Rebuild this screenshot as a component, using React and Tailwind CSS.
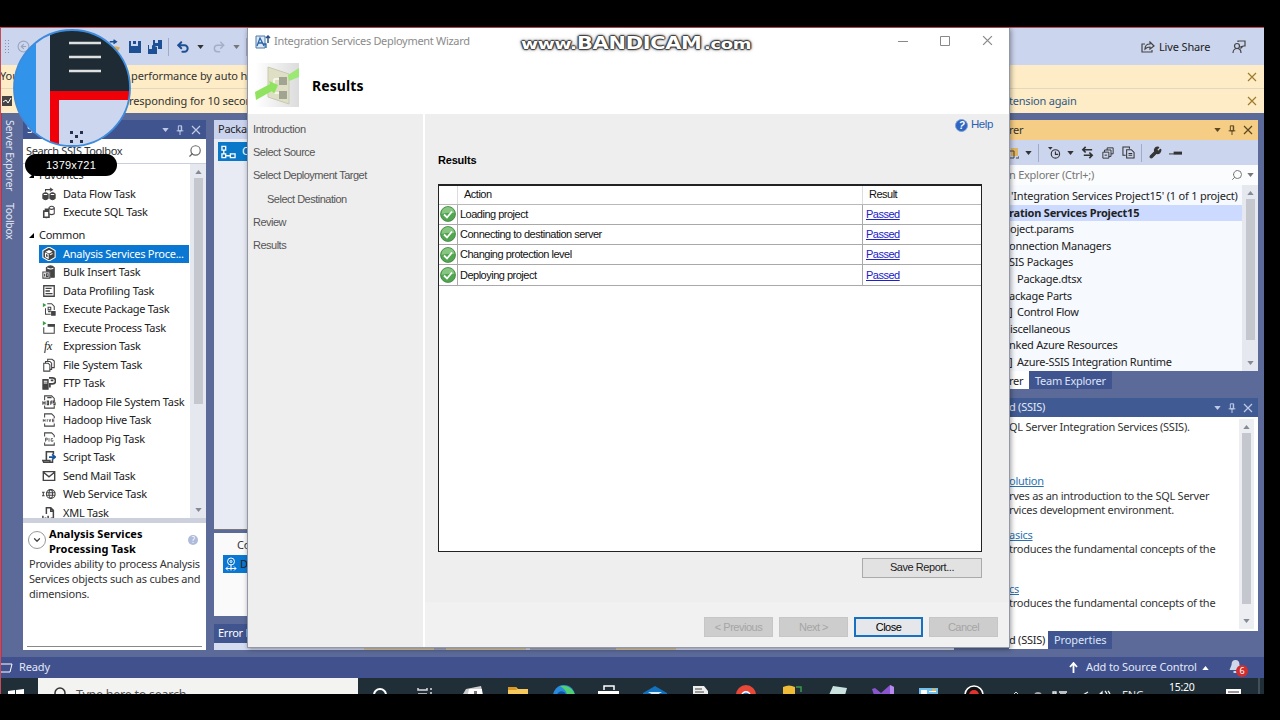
import { ChevronDown, Wrench, Search, Undo2, Redo2, CircleArrowLeft } from 'lucide-react'

const TASK_ICONS = {
  flow: <><path d="M4 5V3h7M9 1l3 2-3 2" fill="none" /><path d="M1 8q3-3 6 0v5q-3 3-6 0zM9 8q3-3 6 0v5q-3 3-6 0z" fill="#444" /><path d="M2 8.5h4M10 8.5h4" stroke="#fff" /></>,
  sql: <><path d="M2 7h6v7H2zM4 7V5h4M5 14v1" fill="none" strokeWidth="1.8" /><path d="M8 3q3-3 6 0v7q-3 2-6 0z" fill="#fff" /><path d="M8 4q3 2 6 0" fill="none" /></>,
  cube: <><path d="M8 0l7 4v8l-7 4-7-4V4z" fill="#444" stroke="#fff" /><path d="M8 3.500l4 2-4 2-4-2z" fill="#fff" stroke="none" /><path d="M4 7l3 1.500V13l-3-2zM9 9l3-1.500" fill="none" stroke="#fff" /></>,
  bulk: <><path d="M5 3q5-4 9 0v11h-4V7H5z" fill="#444" /><path d="M6 3.500q4 2 7 0" stroke="#fff" fill="none" /><path d="M1 8h8v7H1z" fill="#fff" /><path d="M3 10v3M5 10h2v3H5z" fill="none" /></>,
  profile: <><path d="M2 2h12v12H2z" fill="none" strokeWidth="1.500" /><path d="M4 5h7M4 8h5M4 11h8" strokeWidth="1.500" /></>,
  pack: <><path d="M1 1l4 2.500L1 6z" fill="#3c9a48" stroke="none" /><path d="M6 2h5l3 3v4M4 7v7h6M7 6h3v3H7zM7 11h3" fill="none" /><path d="M11 11h4v4h-4z" fill="#444" /></>,
  process: <><path d="M1 0l4 2.500L1 5z" fill="#3c9a48" stroke="none" /><path d="M2 7v7h12V4H7" fill="none" /><path d="M7 4h7v2H7z" fill="#444" /></>,
  files: <><path d="M2 6h5l2 2v7H2z" fill="#fff" /><path d="M4 6V4h5l2 2v7H9M6.500 4V1.500h5l2.500 2V11h-3" fill="none" /></>,
  ftp: <><path d="M1 4h6v11H1z" fill="#444" /><path d="M2 6h4M2 8h4" stroke="#fff" /><path d="M8 2h4a3 3 0 010 7H9v4M10 5h3" fill="none" strokeWidth="2" /></>,
  hdfs: <><path d="M3 6V1h8l3 3v3M3 12v3h11v-3M6 3h5" fill="none" /><path d="M1 7v4M1 9h2.500M3.500 7v4M6 7h1.500v4H6zM10 7v4M10 7h2M10 9h2M15 7h-2v2h2v2h-2" fill="none" /></>,
  hive: <><path d="M3 5V1h8l3 3v2M3 12v3h11v-3" fill="none" /><path d="M1.500 7v3M1.500 8.500h2M3.500 7v3M6 7v3M8 7l1 3 1-3M14 7h-2v3h2M12 8.500h2" fill="none" strokeWidth=".9" /></>,
  pig: <><path d="M3 5V1h8l3 3v2M3 12v3h11v-3" fill="none" /><path d="M4 11V7h2v2H4M8 7v4M12.500 7.500H10.500v3h2V9" fill="none" strokeWidth=".9" /></>,
  script: <><path d="M5 11V2h8v3M1 12h8v2H2zM12 11v3H9" fill="none" strokeWidth="1.800" /><path d="M8 8h6M11.500 5L15 8l-3.500 3" fill="none" stroke="#15549a" strokeWidth="2" /></>,
  mail: <path d="M1.500 3h13v10h-13zM2 4l6 5 6-5" fill="none" strokeWidth="1.600" />,
  web: <><path d="M0 6h3M0 10h3M1.500 6v4" /><circle cx="10" cy="8" r="5" fill="none" /><ellipse cx="10" cy="8" rx="2" ry="5" fill="none" /><path d="M5 6.500h10M5 9.500h10" /></>,
  xml: <path d="M5 9V2h5l3 3v9h-3M10 2v4h3M1 11v4M3 14h2M7 11v4" fill="none" strokeWidth="1.700" />,
}

const COMMON_TASKS = [
  ['bulk', 'Bulk Insert Task'],
  ['profile', 'Data Profiling Task'],
  ['pack', 'Execute Package Task'],
  ['process', 'Execute Process Task'],
  ['fx', 'Expression Task'],
  ['files', 'File System Task'],
  ['ftp', 'FTP Task'],
  ['hdfs', 'Hadoop File System Task'],
  ['hive', 'Hadoop Hive Task'],
  ['pig', 'Hadoop Pig Task'],
  ['script', 'Script Task'],
  ['mail', 'Send Mail Task'],
  ['web', 'Web Service Task'],
  ['xml', 'XML Task'],
]

const TREE = [
  ['oject.params', 'pl-px'],
  ['onnection Managers', 'pl-0'],
  ['SIS Packages', 'pl-0'],
  ['Package.dtsx', 'pl-2'],
  ['ackage Parts', 'pl-0'],
  ['Control Flow', 'pl-2', true],
  ['iscellaneous', 'pl-px'],
  ['nked Azure Resources', 'pl-0'],
  ['Azure-SSIS Integration Runtime', 'pl-2', true],
]

const ACTIONS = ['Loading project', 'Connecting to destination server', 'Changing protection level', 'Deploying project']

function TaskRow({ icon, label, selected }) {
  return (
    <div className={`ml-4 flex h-[18.5px] w-[150px] shrink-0 items-center ${selected ? 'bg-[#0a78d2] text-white' : ''}`}>
      {icon === 'fx' ? (
        <span className="ml-[5px] w-[19px] font-['Liberation_Serif',serif] text-[12px] italic">fx</span>
      ) : (
        <svg viewBox="0 0 16 16" className="mr-[7px] ml-[3px] size-[14px] shrink-0" stroke="#444" strokeWidth="1.2">{TASK_ICONS[icon]}</svg>
      )}
      <span className="whitespace-nowrap">{label}</span>
    </div>
  )
}

function Caret({ className = '', up }) {
  return (
    <svg viewBox="0 0 8 5" className={`h-[4px] w-[7px] shrink-0 ${className}`} fill="currentColor">
      <path d={up ? 'M0 5L4 0l4 5z' : 'M0 0h8L4 5z'} />
    </svg>
  )
}

function Cross({ className = 'size-[10px]' }) {
  return (
    <svg viewBox="0 0 10 10" className={`shrink-0 ${className}`} stroke="currentColor" strokeWidth="1.2">
      <path d="M1 1l8 8M9 1L1 9" />
    </svg>
  )
}

function PanelButtons({ className }) {
  return (
    <div className={`ml-auto flex items-center gap-[7px] pr-[5px] ${className}`}>
      <Caret />
      <svg viewBox="0 0 8 12" className="h-[10px] w-[8px]" fill="none" stroke="currentColor" strokeWidth="1.2">
        <path d="M2 1h4v6H2zM0 7h8M4 7v5M5.500 1v6" />
      </svg>
      <Cross />
    </div>
  )
}

function Scrollbar({ className, thumb }) {
  return (
    <div className={`flex shrink-0 flex-col items-center justify-between py-[6px] text-[#858b96] ${className}`}>
      <Caret up />
      <div className={`mt-[4px] mb-auto w-[9px] bg-[#c4c7cd] ${thumb}`} />
      <Caret />
    </div>
  )
}

function Toolbar() {
  return (
    <div className="flex h-[37px] items-center bg-[#ccd5ee] text-[#1c4f93]">
      <div className="ml-[3px] h-[16px] w-[6px] bg-[radial-gradient(#8793b4_1px,transparent_1px)] bg-[size:3px_3px]" />
      <CircleArrowLeft className="ml-[7px] size-[13px] text-[#9aa4bd]" />
      <svg viewBox="0 0 16 16" className="ml-[76px] size-[15px]">
        <path d="M1 8h10l4 1-3 5H2z" fill="#dca94c" />
        <path d="M4 3h7M8 1l3 2-3 2" fill="none" stroke="#1c4f93" strokeWidth="1.500" />
      </svg>
      <svg viewBox="0 0 12 12" className="ml-[8px] size-[12px]" fill="currentColor">
        <path d="M0 0h2v5h7V0h3v12H0zM4 0h3v3H4z" />
      </svg>
      <svg viewBox="0 0 14 14" className="ml-[7px] size-[14px]" fill="currentColor">
        <path d="M5 0h2v3h3V0h4v9h-4V6H5zM0 5h1v4h3V5l5 2v7H0z" />
      </svg>
      <div className="ml-[6px] h-[18px] w-px bg-[#a1abc8]" />
      <Undo2 strokeWidth={3.5} className="ml-[7px] size-[14px]" />
      <Caret className="ml-[7px] h-[3px] w-[5px] text-[#333]" />
      <Redo2 strokeWidth={2.500} className="ml-[8px] size-[14px] text-[#a4aec7]" />
      <Caret className="ml-[7px] h-[3px] w-[5px] text-[#777]" />
      <div className="ml-[6px] h-[18px] w-px bg-[#a1abc8]" />
      <svg viewBox="0 0 14 12" className="ml-auto h-[12px] w-[14px]" fill="none" stroke="#444" strokeWidth="1.200">
        <path d="M4 3H1v8h10V9M4 8c0-4 3-5 5-5V1l4 4-4 3V6C7 6 5 7 4 8z" />
      </svg>
      <span className="ml-[4px] w-[51px] pt-px tracking-[-0.15px] whitespace-nowrap text-[#222]">Live Share</span>
      <svg viewBox="0 0 14 14" className="mr-[18px] ml-[22px] size-[14px]" fill="none" stroke="#444" strokeWidth="1.200">
        <circle cx="5" cy="6" r="2.500" />
        <path d="M1 13c0-6 8-6 8 0M6 2V1h7v5h-2L9 8V6" />
      </svg>
    </div>
  )
}

function InfoBar({ children, className }) {
  return <div className={`flex h-6 items-center overflow-hidden bg-[#fdecc5] tracking-[-0.1px] whitespace-nowrap text-[#333] ${className}`}>{children}</div>
}

function Toolbox() {
  return (
    <div className="flex h-[530px] w-[183px] flex-col bg-white">
      <div className="flex h-[19px] shrink-0 items-center bg-[#405590] pl-[4px] text-white">
        <span>SSIS Toolbox</span>
        <PanelButtons className="text-[#bfcae8]" />
      </div>
      <div className="flex h-[25px] shrink-0 items-center border-b border-[#c9cfdf] pl-[3px]">
        <span className="tracking-[-0.35px] text-[#333]">Search SSIS Toolbox</span>
        <Search className="mr-[4px] ml-auto size-[14px] -scale-x-100 text-[#666]" />
      </div>
      <div className="flex h-[354px] shrink-0">
        <div className="flex w-[167px] flex-col overflow-hidden pt-[2px]">
          <div className="flex h-[18.5px] shrink-0 items-center pl-[6px]">
            <svg viewBox="0 0 6 6" className="mr-[5px] size-[5px]"><path d="M6 0v6H0z" /></svg>
            Favorites
          </div>
          <TaskRow icon="flow" label="Data Flow Task" />
          <TaskRow icon="sql" label="Execute SQL Task" />
          <div className="mt-[5px] flex h-[18px] shrink-0 items-center pl-[6px]">
            <svg viewBox="0 0 6 6" className="mr-[5px] size-[5px]"><path d="M6 0v6H0z" /></svg>
            Common
          </div>
          <TaskRow icon="cube" label="Analysis Services Proce..." selected />
          {COMMON_TASKS.map(([icon, label]) => <TaskRow key={icon} icon={icon} label={label} />)}
        </div>
        <Scrollbar className="w-4 bg-[#e6e8f0]" thumb="h-[226px]" />
      </div>
      <div className="h-[5px] shrink-0 bg-[#ccd0dc]" />
      <div className="flex h-[34px] shrink-0 pt-[4px] pl-[5px]">
        <div className="mt-[4px] flex size-[18px] items-center justify-center rounded-full border border-[#999]">
          <ChevronDown strokeWidth={3} className="size-[10px] text-[#444]" />
        </div>
        <div className="ml-[3px] leading-[14.5px] font-bold tracking-[0.03px] whitespace-nowrap text-black">
          Analysis Services<br />Processing Task
        </div>
        <span className="mt-[8px] mr-[8px] ml-auto flex size-[10px] items-center justify-center rounded-full bg-[#aebbdc] text-[8px] text-white">?</span>
      </div>
      <div className="pl-[6px] leading-[14.8px] tracking-[-0.22px] whitespace-nowrap text-[#333]">
        Provides ability to process Analysis<br />Services objects such as cubes and<br />dimensions.
      </div>
      <div className="mx-[4px] mt-auto mb-[3px] h-px bg-[#888]" />
    </div>
  )
}

function DesignArea() {
  return (
    <div className="ml-2 flex h-[530px] w-[740px] flex-col">
      <div className="flex h-[19px] items-center bg-[#c9d3ee] pl-[4px]">Packa</div>
      <div className="h-[391px] border-b border-[#777] bg-[#e9ebf4] pt-[3px] pl-[4px]">
        <div className="flex h-[19px] items-center gap-[6px] bg-[#0a78c8] pl-[3px] text-white">
          <svg viewBox="0 0 16 14" className="h-[14px] w-[15px]" fill="none" stroke="#fff" strokeWidth="1.400">
            <path d="M1 1h4v4H1zM1 9h4v4H1zM10 9h5v4h-5zM3 5v4M5 11h5" />
          </svg>
          C
        </div>
      </div>
      <div className="mt-[3px] h-[83px] bg-[#fafafa] pt-[2px]">
        <div className="flex h-[20px] items-center pl-[23px] text-[#333]">Co</div>
        <div className="ml-[9px] flex h-[18px] items-center bg-[#0a78d2] pl-[2px]">
          <svg viewBox="0 0 12 14" className="mr-[3px] h-[15px] w-[12px]" fill="none" stroke="#fff">
            <circle cx="6" cy="4" r="3.500" /><circle cx="6" cy="4" r="1" /><path d="M6 7v6M1 11h10M3 9l-2 2 2 2M9 9l2 2-2 2" />
          </svg>
          D
        </div>
      </div>
      <div className="mt-[8px] flex h-[19px] items-center bg-[#405590] pl-[4px] text-white">Error L</div>
      <div className="flex h-[7px] items-end bg-[#d5dcf0] pl-[150px]">
        <div className="h-[3px] w-[70px] bg-[#d9c9a5]" />
        <div className="h-[3px] w-[12px] bg-[#a7aec0]" />
        <div className="h-[3px] w-[80px] bg-[#d9c9a5]" />
        <div className="ml-[4px] h-[3px] w-[86px] bg-[#a7aec0]" />
        <div className="h-[3px] w-[60px] bg-[#d9c9a5]" />
      </div>
    </div>
  )
}

function SolutionToolbar() {
  return (
    <div className="flex h-[25px] shrink-0 items-center bg-[#ccd5ee] text-[#333]">
      <svg viewBox="0 0 10 12" className="h-[12px] w-[10px]"><path d="M2 1h7v8H2z" fill="#e2b45f" /><path d="M0 4h5v7H0M7 11h3V9" fill="none" stroke="#444" /></svg>
      <Caret className="ml-[6px] h-[3px] w-[5px]" />
      <div className="ml-[6px] h-[18px] w-px bg-[#a1abc8]" />
      <svg viewBox="0 0 14 14" className="ml-[9px] size-[13px]" fill="none" stroke="currentColor" strokeWidth="1.200">
        <circle cx="8" cy="8.500" r="4.500" /><path d="M8 6v3h3" /><path d="M0 1h5L2.500 4z" fill="#333" stroke="none" />
      </svg>
      <Caret className="ml-[6px] h-[3px] w-[5px]" />
      <svg viewBox="0 0 14 14" className="ml-[7px] size-[13px]" fill="none" stroke="currentColor" strokeWidth="1.800">
        <path d="M12 4H3M5 1L2 4l3 3M3 10h9M9 7l3 3-3 3" />
      </svg>
      <svg viewBox="0 0 14 14" className="ml-[8px] size-[12px]" fill="none" stroke="currentColor" strokeWidth="1.100">
        <path d="M1 6h7v7H1zM3 6V3.500h7.500V11H8M6 3.500V1h7v7h-2.500M3 9.500h3" />
      </svg>
      <svg viewBox="0 0 14 14" className="ml-[8px] size-[13px]" fill="none" stroke="currentColor" strokeWidth="1.100">
        <path d="M4 10H1V1h7v2M5 4h5l3 3v6H5zM7 8h4M7 10h4" />
      </svg>
      <div className="ml-[6px] h-[18px] w-px bg-[#a1abc8]" />
      <Wrench fill="currentColor" className="ml-[7px] size-[13px]" />
      <svg viewBox="0 0 14 6" className="ml-[7px] h-[6px] w-[13px]"><path d="M0 4h14" stroke="#333" /><path d="M5 1.500h9v3H5z" fill="#333" /></svg>
    </div>
  )
}

function RightColumn() {
  return (
    <div className="ml-auto flex w-[249px] flex-col overflow-hidden whitespace-nowrap">
      <div className="flex h-[20px] shrink-0 items-center bg-[#f5cd84] text-[#333]">
        rer
        <PanelButtons className="text-[#5c4820]" />
      </div>
      <SolutionToolbar />
      <div className="flex h-[20px] shrink-0 items-center bg-[#fbfcfe] text-[#777]">
        n Explorer (Ctrl+;)
        <Search className="ml-auto size-[12px] -scale-x-100" />
        <Caret className="mr-[4px] ml-[4px] h-[3px] w-[5px]" />
      </div>
      <div className="flex h-[186px] shrink-0 bg-[#f6f9fe]">
        <div className="w-[233px] pt-[3px]">
          <div className="flex h-[16.6px] items-center pl-[2px] tracking-[-0.2px]">'Integration Services Project15' (1 of 1 project)</div>
          <div className="flex h-[16.6px] items-center bg-[#cbdafe] font-bold tracking-[-0.2px]">ration Services Project15</div>
          {TREE.map(([label, pad, bracket]) => (
            <div key={label} className={`flex h-[16.6px] items-center ${pad}`}>
              {bracket && <span className="-ml-[8px] w-[8px]">]</span>}
              {label}
            </div>
          ))}
        </div>
        <Scrollbar className="w-[16px] bg-[#e6e8ef]" thumb="h-[141px]" />
      </div>
      <div className="flex h-[18px] shrink-0 leading-[20px]">
        <div className="w-[20px] bg-white">rer</div>
        <div className="bg-[#405590] px-[6px] text-[#dce4f7]">Team Explorer</div>
      </div>
      <div className="mt-[9px] flex h-[19px] shrink-0 items-center bg-[#405a94] text-[#e3e9f7]">
        d (SSIS)
        <PanelButtons className="text-[#bfcae8]" />
      </div>
      <div className="flex h-[214px] shrink-0 bg-white text-[#333]">
        <div className="flex w-[230px] flex-col pt-[3px] leading-[14.5px]">
          <div>QL Server Integration Services (SSIS).</div>
          <div className="mt-[39.5px] text-[#2d72b0] underline">olution</div>
          <div>rves as an introduction to the SQL Server</div>
          <div>rvices development environment.</div>
          <div className="mt-[10px] text-[#2d72b0] underline">asics</div>
          <div>troduces the fundamental concepts of the</div>
          <div className="mt-[25px] text-[#2d72b0] underline">cs</div>
          <div>troduces the fundamental concepts of the</div>
        </div>
        <Scrollbar className="my-[2px] w-[15px] bg-[#eceef2]" thumb="h-[171px]" />
      </div>
      <div className="flex h-[18px] shrink-0 leading-[18px]">
        <div className="w-[39px] bg-white">d (SSIS)</div>
        <div className="bg-[#405590] px-[6px] tracking-[-0.1px] text-[#dce4f7]">Properties</div>
      </div>
    </div>
  )
}

function Taskbar() {
  return (
    <div className="relative flex h-[16px] items-start overflow-hidden bg-[#1f2e37]">
      <div className="flex w-[37px] justify-center pt-[11px] pl-[-6px]">
        <svg viewBox="0 0 16 16" className="mr-[8px] size-[16px] shrink-0" fill="#fff"><path d="M0 2l7-1v7H0zM8 1l8-1v8H8zM0 9h7v6l-7-1zM8 9h8v7l-8-1z" /></svg>
      </div>
      <div className="flex h-[16px] w-[320px] bg-[#f3f3f2] pt-[9px] pl-[15px]">
        <svg viewBox="0 0 14 14" className="size-[14px] shrink-0" fill="none" stroke="#333" strokeWidth="1.500"><circle cx="7" cy="6" r="5" /></svg>
        <span className="ml-[9px] text-[12.5px] leading-[15px] text-[#555]">Type here to search</span>
      </div>
      <svg viewBox="358 0 906 16" className="h-[16px] w-[906px]" fill="none">
        <circle cx="380" cy="17" r="6" stroke="#fff" strokeWidth="2" />
        <path d="M418 10v2h9v-2M418 16h9M431 10v2M431 14v4" stroke="#ddd" strokeWidth="1.500" />
        <path d="M466 11l15-3 2 8h-20z" fill="#ccc" /><path d="M469 11h13v5h-14z" fill="#fff" /><path d="M474 13v3h3v-3z" fill="#777" />
        <path d="M508 9h8l2 2h10v5h-20z" fill="#f7c95d" /><path d="M508 9h8l1 3h-9z" fill="#dc9826" />
        <circle cx="564" cy="18" r="11" fill="#2a8bdc" /><path d="M560 8c10-2 15 6 15 10h-8c0-5-3-7-7-10z" fill="#51cf72" /><path d="M557 17c1-5 8-5 9 0z" fill="#0e529f" />
        <path d="M598 13h21v4h-21z" fill="#fff" /><path d="M604 12V8h10v4" stroke="#fff" strokeWidth="1.500" />
        <path d="M643 15l12-7 12 7v2h-24z" fill="#1471bd" /><path d="M648 14h14l-7 4z" fill="#dcecff" />
        <path d="M693 8h11l4 5v4h-15z" fill="#eee" /><path d="M695 11h7M695 14h9" stroke="#444" />
        <path d="M736 17a10 10 0 0120 0z" fill="#e84838" /><circle cx="746" cy="18" r="5" fill="#fff" /><circle cx="746" cy="18" r="3.500" fill="#3c78d8" />
        <path d="M783 9q6-3 12 0v8h-12z" fill="#eebc38" /><path d="M796 9h5v5" stroke="#3c9a48" strokeWidth="1.500" />
        <path d="M833 8l14 2-2 7h-16z" fill="#c9e2df" />
        <path d="M872 11l3-1 6 5 9-8 4 2v8h-20z" fill="#8a55cf" /><path d="M890 7l4 2v8h-4z" fill="#b78af0" />
        <path d="M919 10h19v7h-19z" fill="#72c0ee" /><path d="M921 12h6v4h-6zM929 13h7v1h-7z" fill="#fff" /><path d="M932 11h4v2h-4z" fill="#edb541" />
        <circle cx="974" cy="17" r="9" fill="#111" stroke="#fff" strokeWidth="1.500" /><circle cx="974" cy="17" r="5" fill="#e13232" />
        <path d="M1014 16l2-2 2 2" stroke="#ddd" /><circle cx="1038" cy="18" r="4" fill="#aaa" />
        <path d="M1053 14h3v2h-3zM1059 14h8M1060 16h6M1083 17l5-3M1099 17l3-3v3M1105 13q2 2 2 4M1108 13q2 2 2 4" stroke="#eee" strokeWidth="1.300" />
        <path d="M1226 11h15v6h-15z" fill="#fff" /><path d="M1228 14h11" stroke="#333" /><path d="M1259 0v16" stroke="#66717a" />
      </svg>
      <span className="absolute top-[10px] left-[1121px] text-[11px] leading-[14px] text-[#e8e8e8]">ENG</span>
      <span className="absolute top-[2px] left-[1168px] text-[10.5px] leading-[14px] text-white">15:20</span>
    </div>
  )
}

function WizardButton({ children, className = 'border border-[#c6c6c6] bg-[#cdcdcd] text-[#a5a5a5]' }) {
  return <button className={`h-[20px] w-[69px] ${className}`}>{children}</button>
}

function Wizard() {
  return (
    <div className="absolute top-[28px] left-[247px] flex h-[620px] w-[763px] flex-col border-r border-b border-l border-[#9298a8] bg-white font-['Liberation_Sans',sans-serif] text-[11px] tracking-[-0.5px] shadow-[1px_1px_5px_rgba(0,0,0,0.4)]">
      <div className="flex h-[27px] shrink-0 items-center pl-[7px] font-['Noto_Sans',sans-serif] text-[#8b8b8b]">
        <svg viewBox="0 0 16 14" className="h-[14px] w-[16px]" fill="none">
          <path d="M1 1h9v12H1z" fill="#dce8f8" stroke="#4b78aa" />
          <path d="M2 11l3-8 4 8M3 8h5M8 9h3v4" stroke="#2864a5" strokeWidth="1.300" />
          <path d="M13 8V1M11 3l2-2 2 2" stroke="#2b4f85" strokeWidth="1.500" />
        </svg>
        <span className="ml-[3px] text-[11px] tracking-[-0.31px] whitespace-nowrap">Integration Services Deployment Wizard</span>
        <svg viewBox="0 0 10 10" className="mr-[32px] ml-auto size-[10px]" stroke="#888"><path d="M0 4.500h10" /></svg>
        <svg viewBox="0 0 10 10" className="mr-[32px] mb-[2px] size-[10px]" fill="none" stroke="#888"><path d="M.5.500h9v9h-9z" /></svg>
        <Cross className="mr-[16px] mb-[2px] size-[11px]" />
      </div>
      <div className="flex h-[59px] shrink-0 items-start pt-[8px] pl-[7px]">
        <svg viewBox="0 0 44 44" className="size-[44px]">
          <defs><linearGradient id="tile"><stop stopColor="#fff" /><stop offset="1" stopColor="#dcdcdc" /></linearGradient></defs>
          <path d="M0 0h44v44H0z" fill="url(#tile)" />
          <path d="M13 4l21 7v30l-21-7z" fill="#dedfc5" stroke="#c8c9b0" />
          <path d="M24 14h8v8h-8zM24 28h8v8h-8z" fill="#a2a492" />
          <path d="M19 16h5M19 16v14h5" fill="none" stroke="#f4f5e6" strokeWidth="2" />
          <path d="M0 29l15-8-1-3 9 4-4 9-2-3-16 9z" fill="#8fe35f" />
          <path d="M33 12l11-7v9l-10 4z" fill="#9be872" />
        </svg>
        <h1 className="mt-[13px] ml-[13px] font-['Noto_Sans',sans-serif] text-[14px] leading-[19px] font-bold tracking-[0.1px] text-black">Results</h1>
      </div>
      <div className="flex min-h-0 flex-1 bg-[#eeeeee]">
        <nav className="w-[177px] shrink-0 border-r-2 border-white pt-[4px] pl-[5px] text-[#555]">
          {['Introduction', 'Select Source', 'Select Deployment Target', 'Select Destination', 'Review', 'Results'].map((step) => (
            <div key={step} className={`flex h-[23.1px] items-center ${step === 'Select Destination' ? 'pl-[14px]' : ''}`}>
              <span className={step === 'Introduction' ? 'tracking-[-0.4px]' : ''}>{step}</span>
            </div>
          ))}
        </nav>
        <div className="flex flex-1 flex-col">
          <div className="flex h-[22px] items-center justify-end gap-[3px] pr-[16px] text-[#2b5fb4]">
            <span className="flex size-[13px] items-center justify-center rounded-full border border-[#7ca0d8] bg-[#2f65c0] text-[10px] font-bold text-white italic">?</span>
            <span className="text-[11.5px] tracking-[-0.4px]">Help</span>
          </div>
          <div className="mt-[16px] ml-[13px] font-bold tracking-[-0.2px] text-black">Results</div>
          <div className="mt-[15px] ml-[13px] h-[368px] w-[544px] border-[1.5px] border-t-2 border-[#222] bg-white text-[#111]">
            <div className="flex h-[19px] items-center border-b border-[#b9b9b9]">
              <div className="ml-[18px] flex h-full w-[406px] items-center border-r border-l border-[#ddd] pl-[6px]">Action</div>
              <div className="pl-[6px]">Result</div>
            </div>
            {ACTIONS.map((action) => (
              <div key={action} className="flex h-[20.3px] items-center border-b border-[#a9a9a9]">
                <svg viewBox="0 0 16 16" className="mx-px size-[16px] shrink-0">
                  <circle cx="8" cy="8" r="7.500" fill="#52a551" stroke="#347c37" strokeWidth=".7" />
                  <path d="M1.500 8a6.500 6.500 0 0113-1q-7-1-13 1z" fill="#87c681" />
                  <path d="M4 8.500l3 3L12 5.500" fill="none" stroke="#fff" strokeWidth="1.800" />
                </svg>
                <div className="flex h-full w-[406px] items-center border-r border-l border-[#a9a9a9] pl-[2px]">{action}</div>
                <a className="pl-[3px] text-[#2020c8] underline">Passed</a>
              </div>
            ))}
          </div>
          <WizardButton className="mt-[6px] ml-[437px] !w-[120px] border border-[#aaa] bg-[#e2e2e2] tracking-[-0.45px] text-[#222]">Save Report...</WizardButton>
          <div className="mt-auto flex h-[45px] items-start justify-end gap-[6px] bg-[#f1f1f1] pt-[15px] pr-[11px]">
            <WizardButton>&lt; Previous</WizardButton>
            <WizardButton>Next &gt;</WizardButton>
            <WizardButton className="border-2 border-[#1671c3] bg-[#e5e7ea] text-black">Close</WizardButton>
            <WizardButton>Cancel</WizardButton>
          </div>
        </div>
      </div>
    </div>
  )
}

function Magnifier() {
  return (
    <>
      <svg viewBox="0 0 118 118" className="absolute top-[29px] left-[13px] size-[118px]">
        <defs><clipPath id="lens"><circle cx="59" cy="59" r="58" /></clipPath></defs>
        <g clipPath="url(#lens)">
          <path d="M0 0h118v118H0z" fill="#ccd6ef" />
          <path d="M0 0h23v118H0z" fill="#3293ea" />
          <path d="M37 0h81v62H37z" fill="#1e2b35" />
          <path d="M37 62h81v9H46v47h-9z" fill="#f00008" />
          <path d="M56 14h32M56 28h32M56 42h32" stroke="#dde1e2" strokeWidth="2.500" />
          <path d="M57 102h3v3h-3zM67 102h3v3h-3zM62 106h3v3h-3zM57 111h3v3h-3zM67 111h3v3h-3z" fill="#26324d" />
        </g>
        <circle cx="59" cy="59" r="58" fill="none" stroke="#3d8bdc" strokeWidth="1.800" />
      </svg>
      <div className="absolute top-[154px] left-[25px] flex h-[22px] w-[92px] items-center justify-center rounded-full bg-black font-['Liberation_Sans',sans-serif] text-[11px] tracking-[0.2px] text-white">1379x721</div>
    </>
  )
}

function Watermark() {
  return (
    <div className="absolute top-[29px] left-[521px] flex h-[24px] items-baseline font-['DejaVu_Sans',sans-serif] font-bold text-white [text-shadow:0_0_2px_#222,1px_0_1px_#444,-1px_0_1px_#444,0_1px_1px_#444,0_-1px_1px_#444,0_0_4px_#777]">
      <span className="w-[56px] origin-left scale-x-[1.32] text-[14px]">www.</span>
      <span className="w-[127px] origin-left scale-x-[1.16] text-[18px]">BANDICAM</span>
      <span className="w-[50px] origin-left scale-x-[1.28] text-[14px]">.com</span>
    </div>
  )
}

export default function App() {
  return (
    <div className="relative h-[720px] w-[1280px] overflow-hidden bg-black pt-[27px] font-['Noto_Sans',sans-serif] text-[11px] tracking-[-0.26px] text-[#222]">
      <div className="h-[667px] w-[1264px] overflow-hidden border-t border-l border-[#c54b5a]">
        <Toolbar />
        <InfoBar className="border-b border-[#e3d7bd]">
          <span className="-ml-px w-[131px]">You</span>
          <span>performance by auto hid</span>
          <span className="mr-[7px] ml-auto text-[#a07b2e]"><Cross /></span>
        </InfoBar>
        <InfoBar>
          <svg viewBox="0 0 12 12" className="size-[12px]"><path d="M1 1h10v10H1z" fill="#444" /><path d="M2 7l3-2 2 3 3-5" fill="none" stroke="#fff" /></svg>
          <span className="ml-[116px]">responding for 10 secon</span>
          <span className="ml-auto w-[66px] tracking-[-0.2px] text-[#315985]">tension again</span>
          <span className="mr-[7px] ml-[172px] text-[#a07b2e]"><Cross /></span>
        </InfoBar>
        <div className="flex h-[544px] border-l border-[#9d3d61] bg-[#5b6a98] pt-[7px] pr-[6px]">
          <div className="flex w-[21px] shrink-0 items-center gap-[12px] text-[10.5px] tracking-[-0.3px] text-[#e1e7f6] [writing-mode:vertical-rl]">
            <span className="self-start pr-[6px]">Server Explorer</span>
            <span className="self-start pr-[6px]">Toolbox</span>
          </div>
          <Toolbox />
          <DesignArea />
          <RightColumn />
        </div>
        <div className="flex h-[21px] items-center bg-[#40518e] tracking-[-0.12px] text-[#e3e8f5]">
          <svg viewBox="0 0 12 10" className="h-[10px] w-[12px]" fill="none" stroke="#fff"><path d="M0 1h11L9 9H0" /></svg>
          <span className="ml-[6px]">Ready</span>
          <svg viewBox="0 0 9 11" className="ml-auto h-[11px] w-[9px]" fill="none" stroke="#fff" strokeWidth="1.800"><path d="M4.500 11V1M1 5l3.500-4L8 5" /></svg>
          <span className="ml-[8px] w-[110px] whitespace-nowrap">Add to Source Control</span>
          <Caret up className="ml-[6px] h-[4px] w-[6px] text-white" />
          <div className="relative mr-[16px] ml-[20px] h-[16px] w-[19px]">
            <svg viewBox="0 0 12 13" className="size-[13px]" fill="#cfd7eb"><path d="M6 0q4 0 4 5l2 5H0l2-5q0-5 4-5zM4 11h4v2H4z" /></svg>
            <span className="absolute top-[5px] left-[7px] flex size-[12px] items-center justify-center rounded-full bg-[#d12e2e] text-[9px] text-white">6</span>
          </div>
        </div>
        <Taskbar />
      </div>
      <Wizard />
      <Magnifier />
      <Watermark />
    </div>
  )
}
